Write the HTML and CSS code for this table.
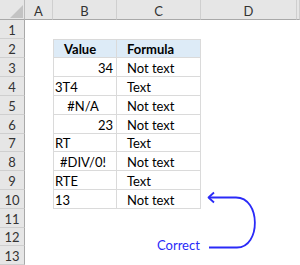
FILE: index.html
```html
<!DOCTYPE html>
<html>
<head>
<meta charset="utf-8">
<link rel="stylesheet" href="styles.css">
</head>
<body>
<div class="sheet">
  <div class="corner"><svg width="25" height="20" viewBox="0 0 25 20"><polygon points="10,18 23,18 23,5" fill="#c3c3c3"/></svg></div>
  <div class="ch">A</div><div class="ch">B</div><div class="ch">C</div><div class="ch">D</div><div class="ch end"></div>

  <div class="rh">1</div><div class="c"></div><div class="c"></div><div class="c"></div><div class="c"></div><div class="c"></div>

  <div class="rh">2</div><div class="c"></div><div class="t tb th top">Value</div><div class="t th top">Formula</div><div class="c"></div><div class="c"></div>

  <div class="rh">3</div><div class="c"></div><div class="t tb r">34</div><div class="t ind">Not text</div><div class="c"></div><div class="c"></div>

  <div class="rh">4</div><div class="c"></div><div class="t tb l">3T4</div><div class="t ind">Text</div><div class="c"></div><div class="c"></div>

  <div class="rh">5</div><div class="c"></div><div class="t tb m">#N/A</div><div class="t ind">Not text</div><div class="c"></div><div class="c"></div>

  <div class="rh">6</div><div class="c"></div><div class="t tb r">23</div><div class="t ind">Not text</div><div class="c"></div><div class="c"></div>

  <div class="rh">7</div><div class="c"></div><div class="t tb l">RT</div><div class="t ind">Text</div><div class="c"></div><div class="c"></div>

  <div class="rh">8</div><div class="c"></div><div class="t tb m">#DIV/0!</div><div class="t ind">Not text</div><div class="c"></div><div class="c"></div>

  <div class="rh">9</div><div class="c"></div><div class="t tb l">RTE</div><div class="t ind">Text</div><div class="c"></div><div class="c"></div>

  <div class="rh">10</div><div class="c"></div><div class="t tb l">13</div><div class="t ind">Not text</div><div class="c"></div><div class="c"></div>

  <div class="rh">11</div><div class="c"></div><div class="c"></div><div class="c"></div><div class="c"></div><div class="c"></div>
  <div class="rh">12</div><div class="c"></div><div class="c"></div><div class="c"></div><div class="c"></div><div class="c"></div>
  <div class="rh">13</div><div class="c"></div><div class="c"></div><div class="c"></div><div class="c"></div><div class="c"></div>

  <svg class="arrow" width="300" height="265" viewBox="0 0 300 265">
    <path d="M209 247.5 L237 247.5 C261 247.5 261 197.5 236 197.5 L209 197.5" fill="none" stroke="#2a2af8" stroke-width="1.8"/>
    <path d="M214 192.5 L208.5 197.5 L214 202.5" fill="none" stroke="#2a2af8" stroke-width="1.8" stroke-linejoin="round"/>
  </svg>
  <div class="note">Correct</div>
</div>
</body>
</html>
```

FILE: styles.css
```css
html, body {
  margin: 0;
  padding: 0;
  background: #fff;
}
.sheet {
  position: relative;
  width: 300px;
  height: 265px;
  overflow: hidden;
  display: grid;
  grid-template-columns: 25px 28px 64px 84px 96px 3px;
  grid-template-rows: 20px 19px 19px 19px 19px 19px 19px 18px 19px 19px 19px 19px 18px 19px;
  font-family: "Lato", "Liberation Sans", sans-serif;
  font-size: 13px;
  color: #000;
}
.corner {
  background: #e6e6e6;
  border-right: 1px solid #bcbcbc;
  border-bottom: 1px solid #a9a9a9;
  box-sizing: border-box;
}
.corner svg { display: block; }
.ch {
  background: #e6e6e6;
  border-right: 1px solid #cfcfcf;
  border-bottom: 1px solid #a9a9a9;
  box-sizing: border-box;
  display: flex;
  align-items: center;
  justify-content: center;
  padding-top: 3px;
  color: #333;
}
.rh {
  background: #e6e6e6;
  border-right: 1px solid #a9a9a9;
  border-bottom: 1px solid #cfcfcf;
  box-sizing: border-box;
  display: flex;
  align-items: center;
  justify-content: center;
  color: #333;
  padding-top: 1px;
}
.c { background: #fff; }
.t {
  box-sizing: border-box;
  border-right: 1px solid #dadada;
  border-bottom: 1px solid #dadada;
  display: flex;
  align-items: center;
  padding-top: 1px;
  white-space: nowrap;
}
.tb { border-left: 1px solid #dadada; }
.top { border-top: 1px solid #dadada; }
.th {
  background: #ddebf7;
  font-weight: bold;
  padding-left: 10px;
}
.r { justify-content: flex-end; padding-right: 3px; }
.l { padding-left: 1px; }
.m { justify-content: center; padding-right: 4px; }
.ind { padding-left: 10px; }
.arrow {
  position: absolute;
  left: 0;
  top: 0;
  pointer-events: none;
}
.note {
  position: absolute;
  left: 157px;
  top: 237px;
  color: #2a2af8;
  font-size: 13px;
}
```
